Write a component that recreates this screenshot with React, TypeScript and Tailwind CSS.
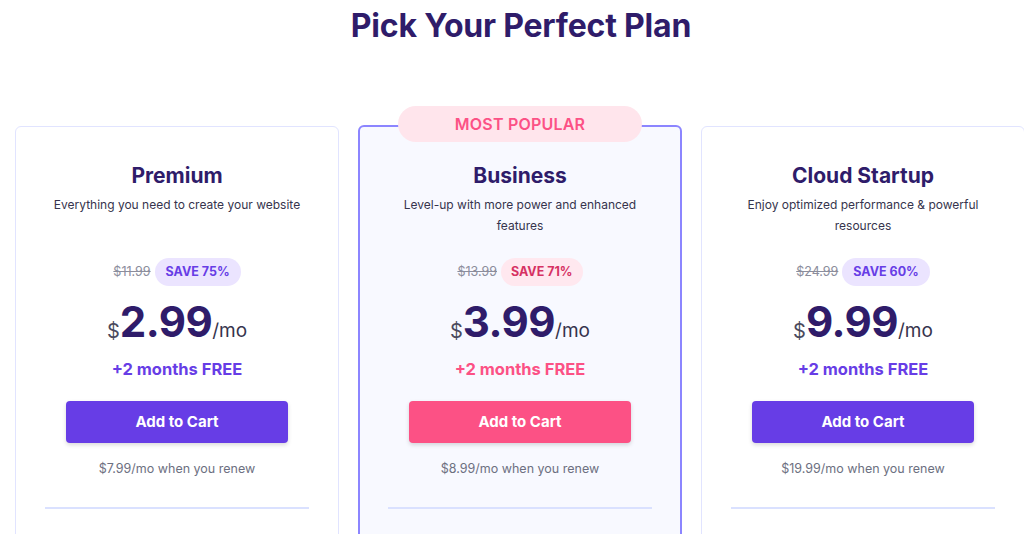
import { Fragment } from 'react';

interface Plan {
  name: string;
  desc: string;
  oldPrice: string;
  save: string;
  price: string;
  renew: string;
  popular?: boolean;
}

const PLANS: Plan[] = [
  {
    name: 'Premium',
    desc: 'Everything you need to create your website',
    oldPrice: '$11.99',
    save: 'SAVE 75%',
    price: '2.99',
    renew: '$7.99/mo when you renew',
  },
  {
    name: 'Business',
    desc: 'Level-up with more power and enhanced features',
    oldPrice: '$13.99',
    save: 'SAVE 71%',
    price: '3.99',
    renew: '$8.99/mo when you renew',
    popular: true,
  },
  {
    name: 'Cloud Startup',
    desc: 'Enjoy optimized performance & powerful resources',
    oldPrice: '$24.99',
    save: 'SAVE 60%',
    price: '9.99',
    renew: '$19.99/mo when you renew',
  },
];

function PlanCard({ plan }: { plan: Plan }) {
  const hot = plan.popular;

  return (
    <div
      className={
        hot
          ? 'relative w-[324px] shrink-0 h-[420px] rounded-[6px] border-2 border-[#8c85ff] bg-[#f8f9ff] px-[28px] -mt-px'
          : 'relative w-[324px] shrink-0 h-[420px] rounded-[6px] border border-[#e1e4ff] bg-white px-[29px]'
      }
    >
      {hot && (
        <div className="absolute left-1/2 -translate-x-1/2 -top-[21px] w-[244px] h-[36px] rounded-full bg-[#ffe5ec] flex items-center justify-center text-[16px] font-semibold text-[#fc5185] tracking-[0.2px]">
          MOST POPULAR
        </div>
      )}

      <div className="flex flex-col items-center pt-[35px] text-center">
        <h3 className="text-[21px] leading-[28px] font-bold text-[#2f1c6a]">{plan.name}</h3>
        <p className="mt-[4px] h-[42px] w-[254px] text-[12px] leading-[21px] text-[#36344d]">{plan.desc}</p>

        <div className="mt-[22px] flex items-center gap-[4px] h-[28px]">
          <span className="text-[12.5px] text-[#8b8d9c] line-through">{plan.oldPrice}</span>
          <span
            className={
              hot
                ? 'h-[28px] px-[10px] rounded-full bg-[#ffe8ef] text-[#d63163] text-[12.5px] font-bold flex items-center'
                : 'h-[28px] px-[11px] rounded-full bg-[#ebe4ff] text-[#673de6] text-[12.5px] font-bold flex items-center'
            }
          >
            {plan.save}
          </span>
        </div>

        <div className="mt-[15px] flex items-end h-[42px] text-[#2f1c6a]">
          <span className="text-[20px] leading-[20px] pb-[2px] text-[#4b4a5e]">$</span>
          <span className="text-[42px] leading-[42px] font-bold tracking-[-0.5px]">{plan.price}</span>
          <span className="text-[19px] leading-[20px] pb-[2px] text-[#36344d]">/mo</span>
        </div>

        <div
          className={
            hot
              ? 'mt-[14px] text-[16.5px] leading-[24px] font-bold text-[#fc5185]'
              : 'mt-[14px] text-[16.5px] leading-[24px] font-bold text-[#673de6]'
          }
        >
          +2 months FREE
        </div>

        <button
          className={
            hot
              ? 'mt-[20px] w-[222px] h-[42px] rounded-[4px] bg-[#fc5185] text-white text-[15px] font-bold shadow-[0_2px_4px_rgba(0,0,0,0.15)]'
              : 'mt-[20px] w-[222px] h-[42px] rounded-[4px] bg-[#673de6] text-white text-[15px] font-bold shadow-[0_2px_4px_rgba(0,0,0,0.15)]'
          }
        >
          Add to Cart
        </button>

        <p className="mt-[16px] text-[12.5px] leading-[20px] text-[#6d7081]">{plan.renew}</p>

        <div className="mt-[28px] w-full h-[2px] bg-[#dae1ff]" />
      </div>
    </div>
  );
}

export default function App() {
  return (
    <div className="w-[1024px] h-[534px] overflow-hidden bg-white font-['Inter',sans-serif]">
      <h1 className="pt-[6px] pl-[18px] text-center text-[32px] leading-[40px] font-bold text-[#2f1c6a] tracking-[-0.2px]">
        Pick Your Perfect Plan
      </h1>

      <div className="mt-[80px] flex gap-[19px] pl-[15px]">
        {PLANS.map((p) => (
          <Fragment key={p.name}>
            <PlanCard plan={p} />
          </Fragment>
        ))}
      </div>
    </div>
  );
}
